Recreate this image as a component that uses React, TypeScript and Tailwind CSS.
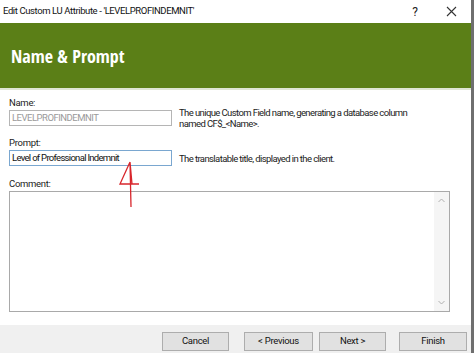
import React from "react";

const ui = { fontFamily: 'Roboto, "Liberation Sans", Arial, sans-serif' };
const head = { fontFamily: '"Open Sans Condensed", "Liberation Sans", Arial, sans-serif' };

function Btn({ label, w, cls }: { label: string; w: string; cls?: string }) {
  return (
    <div
      className={`${w} ${cls ?? ""} h-[19px] border border-[#adadad] bg-[#e1e1e1] flex items-center justify-center text-[9.5px] tracking-[-0.3px] text-[#111]`}
      style={ui}
    >
      {label}
    </div>
  );
}

export default function App() {
  return (
    <div className="w-[474px] h-[353px] flex overflow-hidden bg-white" style={ui}>
      <div className="w-[471px] flex flex-col">
        {/* title bar */}
        <div className="h-[23px] flex items-center bg-white">
          <span className="pl-[3px] text-[9.5px] tracking-[-0.4px] text-[#111]" style={ui}>
            Edit Custom LU Attribute - 'LEVELPROFINDEMNIT'
          </span>
          <span className="ml-auto mr-[28px] text-[12px] text-[#222]">?</span>
          <svg width="11" height="11" viewBox="0 0 11 11" className="mr-[14px]">
            <path d="M1 1 L10 10 M10 1 L1 10" stroke="#333" strokeWidth="1.1" />
          </svg>
        </div>
        {/* green header */}
        <div className="h-[65px] bg-[#5b7f17] flex items-center pl-[11px]">
          <span className="text-white font-bold text-[18px] leading-[20px]" style={head}>
            Name &amp; Prompt
          </span>
        </div>
        <div className="h-[2px] bg-[#dfe6d4]" />
        {/* content */}
        <div className="relative flex flex-col px-[9px] text-[9.5px] tracking-[-0.3px] text-[#222]" style={ui}>
          <div className="mt-[7px] h-[12px] leading-[12px]">Name:</div>
          <div className="mt-[1px] h-[16px] flex items-start">
            <div className="w-[163px] h-[16px] border border-[#b5b5b5] flex items-center pl-[2px] text-[9.5px] tracking-[-0.5px] text-[#9a9a9a]">
              LEVELPROFINDEMNIT
            </div>
            <div className="ml-[7px] -mt-[3px] text-[9.5px] tracking-[-0.6px] leading-[11px] text-[#222] whitespace-nowrap">
              The unique Custom Field name, generating a database column
              <br />
              named CF$_&lt;Name&gt;.
            </div>
          </div>
          <div className="mt-[11px] h-[12px] leading-[12px]">Prompt:</div>
          <div className="mt-[1px] h-[16px] flex items-center">
            <div className="w-[163px] h-[16px] border border-[#7aa7d0] flex items-center pl-[2px] text-[9.5px] tracking-[-0.7px] text-[#111]">
              Level of Professional Indemnit
            </div>
            <div className="ml-[7px] text-[9.5px] tracking-[-0.6px] leading-[11px] text-[#222] whitespace-nowrap">
              The translatable title, displayed in the client.
            </div>
          </div>
          <div className="mt-[12px] h-[12px] leading-[12px]">Comment:</div>
          <div className="mt-[1px] w-[441px] h-[121px] border border-[#a9a9a9] flex">
            <div className="flex-1" />
            <div className="w-[15px] bg-[#f5f5f5] flex flex-col items-center justify-between py-[6px]">
              <svg width="7" height="5" viewBox="0 0 7 5">
                <path d="M0.5 4 L3.5 1 L6.5 4" fill="none" stroke="#b0b0b0" strokeWidth="1" />
              </svg>
              <svg width="7" height="5" viewBox="0 0 7 5">
                <path d="M0.5 1 L3.5 4 L6.5 1" fill="none" stroke="#b0b0b0" strokeWidth="1" />
              </svg>
            </div>
          </div>
          {/* red annotation arrow */}
          <svg
            className="absolute left-[115px] top-[70px]"
            width="30"
            height="50"
            viewBox="0 0 30 50"
          >
            <path
              d="M15 2 L16 47 M15 2 L5 24 L24 24 M15 2 L17 24"
              fill="none"
              stroke="#d8262c"
              strokeWidth="1.3"
            />
          </svg>
        </div>
        {/* footer */}
        <div className="mt-[13px] flex-1 bg-[#f0f0f0] flex items-start pt-[7px] pr-[4px] justify-end">
          <Btn label="Cancel" w="w-[67px]" />
          <Btn label="< Previous" w="w-[69px]" cls="ml-[15px]" />
          <Btn label="Next >" w="w-[67px]" cls="ml-[6px]" />
          <Btn label="Finish" w="w-[68px]" cls="ml-[13px]" />
        </div>
      </div>
      <div className="w-[3px] bg-[#6f6f6f]" />
    </div>
  );
}
